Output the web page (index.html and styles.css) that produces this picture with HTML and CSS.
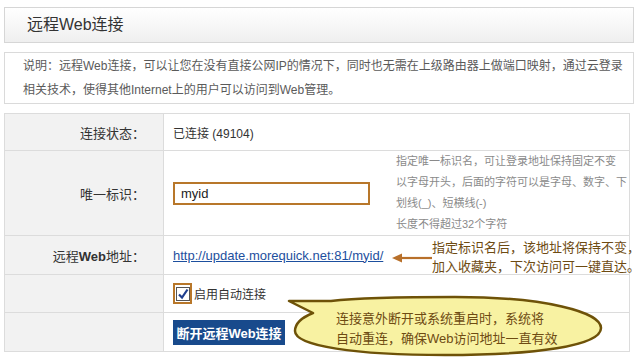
FILE: index.html
```html
<!DOCTYPE html>
<html lang="zh-CN">
<head>
  <meta charset="UTF-8">
  <title>远程Web连接</title>
  <link rel="stylesheet" href="styles.css">
</head>
<body>
  <div class="page">
    <div class="title-box">远程Web连接</div>

    <div class="desc-box">
      说明：远程Web连接，可以让您在没有直接公网IP的情况下，同时也无需在上级路由器上做端口映射，通过云登录<br>相关技术，使得其他Internet上的用户可以访问到Web管理。
    </div>

    <table class="form-table">
      <tr class="row-status">
        <th>连接状态：</th>
        <td class="small">已连接 (49104)</td>
      </tr>
      <tr class="row-id">
        <th>唯一标识：</th>
        <td>
          <div class="id-cell">
            <input class="id-input" type="text" value="myid">
            <div class="hint">
              指定唯一标识名，可让登录地址保持固定不变<br>
              以字母开头，后面的字符可以是字母、数字、下<br>
              划线(_)、短横线(-)<br>
              长度不得超过32个字符
            </div>
          </div>
        </td>
      </tr>
      <tr class="row-url">
        <th>远程<b>Web</b>地址：</th>
        <td><a class="url" href="#">http://update.morequick.net:81/myid/</a></td>
      </tr>
      <tr class="row-check">
        <th></th>
        <td>
          <label class="check">
            <span class="check-ring">
              <span class="check-box">
                <svg width="12" height="12" viewBox="0 0 12 12"><path d="M2 6.5 L5 9.5 L10.5 1.5" fill="none" stroke="#1f3f8f" stroke-width="2.2"/></svg>
              </span>
            </span>
            启用自动连接
          </label>
        </td>
      </tr>
      <tr class="row-btn">
        <th></th>
        <td><button class="btn">断开远程Web连接</button></td>
      </tr>
    </table>

    <!-- annotation: arrow to the url -->
    <div class="note-arrow">
      <svg width="40" height="12" viewBox="0 0 40 12"><path d="M40 6 H8" stroke="#b8702a" stroke-width="2.2"/><path d="M0 6 L10 1.5 L10 10.5 Z" fill="#b8702a"/></svg>
    </div>
    <div class="note-text">指定标识名后，该地址将保持不变，<br>加入收藏夹，下次访问可一键直达。</div>

    <!-- annotation: callout bubble -->
    <svg class="bubble" width="324" height="68" viewBox="0 0 324 68">
      <path d="M4 8 L46 8 C80 4 140 4 170 4 C260 4 316 19 316 35 C316 53 250 62 160 62 C70 62 10 53 10 38 C10 30 18 24 28 20 Z" fill="#f8f2a2" stroke="#6e5208" stroke-width="2.5" stroke-linejoin="round"/>
    </svg>
    <div class="bubble-text">连接意外断开或系统重启时，系统将<br>自动重连，确保Web访问地址一直有效</div>
  </div>
</body>
</html>
```

FILE: styles.css
```css
body {
  margin: 0;
  background: #fff;
  font-family: "Liberation Sans", "Noto Sans CJK SC", sans-serif;
  color: #333;
}
.page {
  position: relative;
  width: 640px;
  height: 360px;
  padding: 7px 6px 0 4px;
  box-sizing: border-box;
  overflow: hidden;
}
.title-box {
  height: 34px;
  line-height: 34px;
  padding-left: 22px;
  font-size: 16px;
  color: #333;
  border: 1px solid #d6d6d6;
  background: linear-gradient(#ffffff, #efefef);
}
.desc-box {
  margin-top: 9px;
  padding: 1px 4px 1px 18px;
  font-size: 12px;
  line-height: 24px;
  color: #5a5a5a;
  white-space: nowrap;
  border: 1px solid #dadada;
}
.form-table {
  margin-top: 9px;
  width: 626px;
  border-collapse: collapse;
  font-size: 13px;
}
.form-table th,
.form-table td {
  border: 1px solid #dcdcdc;
  padding: 0;
}
.form-table th {
  width: 140px;
  padding-right: 18px;
  background: #f2f2f2;
  text-align: right;
  font-weight: normal;
  color: #333;
}
.form-table th b {
  font-weight: bold;
}
.form-table td {
  padding-left: 9px;
  background: #fff;
}
.form-table td.small {
  font-size: 12px;
}
.row-status { height: 37px; }
.row-id { height: 83px; }
.row-url { height: 39px; }
.row-check { height: 38px; }
.row-btn { height: 39px; }

.id-cell {
  display: flex;
  align-items: center;
}
.id-input {
  width: 197px;
  height: 23px;
  box-sizing: border-box;
  border: 2px solid #b8772a;
  padding: 0 6px;
  font-family: "Liberation Sans", sans-serif;
  font-size: 13px;
  color: #222;
  outline: none;
}
.hint {
  margin-left: 26px;
  font-size: 11px;
  line-height: 21px;
  color: #8a8a8a;
}
.url {
  color: #1d4f9e;
  font-size: 13px;
}
.check {
  display: flex;
  align-items: center;
  gap: 2px;
  font-size: 12px;
  color: #333;
}
.check-ring {
  width: 19px;
  height: 21px;
  box-sizing: border-box;
  border: 2px solid #b8772a;
  display: flex;
  align-items: center;
  justify-content: center;
}
.check-box {
  width: 12px;
  height: 12px;
  border: 1px solid #555;
  background: #fff;
  display: flex;
  align-items: center;
  justify-content: center;
}
.btn {
  height: 25px;
  width: 112px;
  border: none;
  background: #184a8c;
  color: #fff;
  font-family: "Liberation Sans", "Noto Sans CJK SC", sans-serif;
  font-size: 13px;
  font-weight: bold;
  padding: 0;
}

.note-arrow {
  position: absolute;
  left: 392px;
  top: 252px;
  line-height: 0;
}
.note-text {
  position: absolute;
  left: 432px;
  top: 238px;
  white-space: nowrap;
  font-size: 13px;
  line-height: 19px;
  color: #6e4b12;
}
.bubble {
  position: absolute;
  left: 285px;
  top: 293px;
}
.bubble-text {
  position: absolute;
  left: 336px;
  top: 309px;
  white-space: nowrap;
  font-size: 13px;
  line-height: 20px;
  color: #6e4b12;
}
```
